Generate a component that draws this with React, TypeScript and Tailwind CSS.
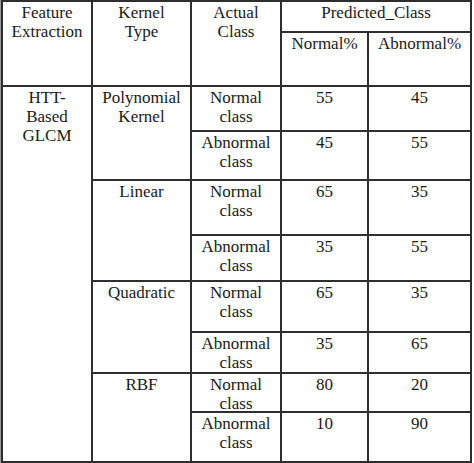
const rows = [
  { actual: ["Normal", "class"], normal: "55", abnormal: "45" },
  { actual: ["Abnormal", "class"], normal: "45", abnormal: "55" },
  { actual: ["Normal", "class"], normal: "65", abnormal: "35" },
  { actual: ["Abnormal", "class"], normal: "35", abnormal: "55" },
  { actual: ["Normal", "class"], normal: "65", abnormal: "35" },
  { actual: ["Abnormal", "class"], normal: "35", abnormal: "65" },
  { actual: ["Normal", "class"], normal: "80", abnormal: "20" },
  { actual: ["Abnormal", "class"], normal: "10", abnormal: "90" },
];

const kernels = [
  { name: ["Polynomial", "Kernel"], row: "row-[3/span_2]" },
  { name: ["Linear"], row: "row-[5/span_2]" },
  { name: ["Quadratic"], row: "row-[7/span_2]" },
  { name: ["RBF"], row: "row-[9/span_2]" },
];

const rowStarts = [
  "row-start-3",
  "row-start-4",
  "row-start-5",
  "row-start-6",
  "row-start-7",
  "row-start-8",
  "row-start-9",
  "row-start-10",
];

function Cell({ className = "", lines }: { className?: string; lines: string[] }) {
  return (
    <div className={`bg-white pt-[1px] text-center ${className}`}>
      {lines.map((l, i) => (
        <div key={i}>{l}</div>
      ))}
    </div>
  );
}

export default function App() {
  return (
    <div
      className="flex w-[474px] h-[463px] bg-white text-[#1a1a1a] text-[17px] leading-[19px]"
      style={{ fontFamily: '"Liberation Serif", "Times New Roman", serif' }}
    >
      <div className="w-[1px] h-full bg-[#9a9a9a]" />
      <div className="grid grid-cols-[88px_97px_88px_85px_101px] grid-rows-[29px_52px_43px_47px_53px_44px_49px_39px_37px_48px] gap-[2px] p-[2px] bg-[#2e2e2e] h-[463px]">
        {/* header */}
        <Cell className="col-start-1 row-[1/span_2]" lines={["Feature", "Extraction"]} />
        <Cell className="col-start-2 row-[1/span_2]" lines={["Kernel", "Type"]} />
        <Cell className="col-start-3 row-[1/span_2]" lines={["Actual", "Class"]} />
        <Cell className="col-[4/span_2] row-start-1" lines={["Predicted_Class"]} />
        <Cell className="col-start-4 row-start-2" lines={["Normal%"]} />
        <Cell className="col-start-5 row-start-2" lines={["Abnormal%"]} />

        {/* body */}
        <Cell className="col-start-1 row-[3/span_8]" lines={["HTT-", "Based", "GLCM"]} />
        {kernels.map((k) => (
          <Cell key={k.row} className={`col-start-2 ${k.row}`} lines={k.name} />
        ))}
        {rows.map((r, i) => (
          <div key={i} className="contents">
            <Cell className={`col-start-3 ${rowStarts[i]}`} lines={r.actual} />
            <Cell className={`col-start-4 ${rowStarts[i]}`} lines={[r.normal]} />
            <Cell className={`col-start-5 ${rowStarts[i]}`} lines={[r.abnormal]} />
          </div>
        ))}
      </div>
    </div>
  );
}
